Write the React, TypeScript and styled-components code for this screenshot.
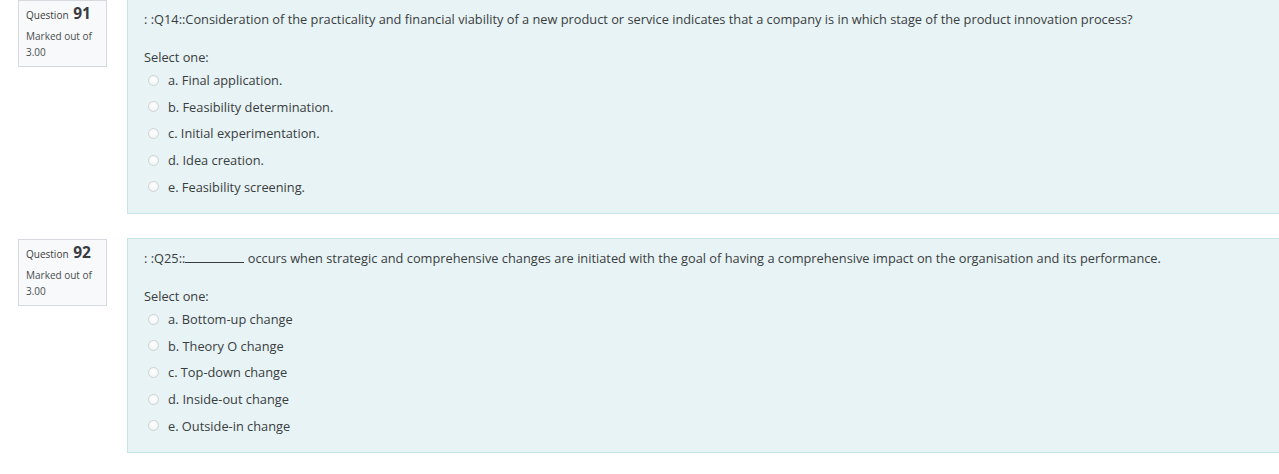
import React from "react";
import styled, { createGlobalStyle } from "styled-components";

const Global = createGlobalStyle`
  html, body { margin: 0; padding: 0; background: #ffffff; overflow: hidden; }
  body { font-family: "Open Sans", "Liberation Sans", sans-serif; color: #3a3d40; }
`;

const Page = styled.div`
  display: flex;
  flex-direction: column;
  gap: 24px;
  margin-top: -1px;
  margin-right: -6px;
`;

const Que = styled.div`
  display: flex;
  align-items: flex-start;
  gap: 20px;
  padding-left: 18px;
`;

const Info = styled.div`
  flex: 0 0 auto;
  width: 89px;
  box-sizing: border-box;
  margin-top: 1px;
  padding: 2px 6px 6px 7px;
  background: #f8f9fa;
  border: 1px solid #d6dade;
  font-size: 10px;
  line-height: 16px;
`;

const QNo = styled.div`
  font-size: 10px;
  line-height: 20px;
  b {
    font-size: 15.5px;
    font-weight: 700;
    margin-left: 2px;
  }
`;

const Grade = styled.div`
  margin-top: 3px;
  font-size: 10px;
  line-height: 16px;
  color: #4a4d50;
`;

const Content = styled.div`
  flex: 1 1 auto;
  background: #e7f3f5;
  border: 1px solid #c7e4e9;
  padding: 9px 16px 13px 16px;
  font-size: 12.8px;
`;

const QText = styled.div`
  line-height: 20px;
`;

const Blank = styled.span`
  display: inline-block;
  width: 59px;
  border-bottom: 1px solid #3a3d40;
  height: 14px;
  vertical-align: baseline;
`;

const Prompt = styled.div`
  margin-top: 18px;
  line-height: 20px;
`;

const Answers = styled.div`
  display: flex;
  flex-direction: column;
`;

const Option = styled.label`
  display: flex;
  align-items: center;
  height: 26.6px;
  padding-left: 4px;
  gap: 9px;
`;

const Radio = styled.span`
  width: 9px;
  height: 9px;
  border-radius: 50%;
  border: 1px solid #cfd3d6;
  background: radial-gradient(circle at 50% 40%, #ffffff 0%, #eef0f1 100%);
  box-sizing: content-box;
  flex: 0 0 auto;
`;

type Q = { no: number; text: React.ReactNode; options: string[] };

const questions: Q[] = [
  {
    no: 91,
    text: ": :Q14::Consideration of the practicality and financial viability of a new product or service indicates that a company is in which stage of the product innovation process?",
    options: [
      "a. Final application.",
      "b. Feasibility determination.",
      "c. Initial experimentation.",
      "d. Idea creation.",
      "e. Feasibility screening.",
    ],
  },
  {
    no: 92,
    text: (
      <>
        : :Q25::<Blank /> occurs when strategic and comprehensive changes are initiated with the goal of having a comprehensive impact on the organisation and its performance.
      </>
    ),
    options: [
      "a. Bottom-up change",
      "b. Theory O change",
      "c. Top-down change",
      "d. Inside-out change",
      "e. Outside-in change",
    ],
  },
];

export default function App() {
  return (
    <>
      <Global />
      <Page>
        {questions.map((q) => (
          <Que key={q.no}>
            <Info>
              <QNo>
                Question <b>{q.no}</b>
              </QNo>
              <Grade>
                Marked out of
                <br />
                3.00
              </Grade>
            </Info>
            <Content>
              <QText>{q.text}</QText>
              <Prompt>Select one:</Prompt>
              <Answers>
                {q.options.map((o) => (
                  <Option key={o}>
                    <Radio />
                    <span>{o}</span>
                  </Option>
                ))}
              </Answers>
            </Content>
          </Que>
        ))}
      </Page>
    </>
  );
}
